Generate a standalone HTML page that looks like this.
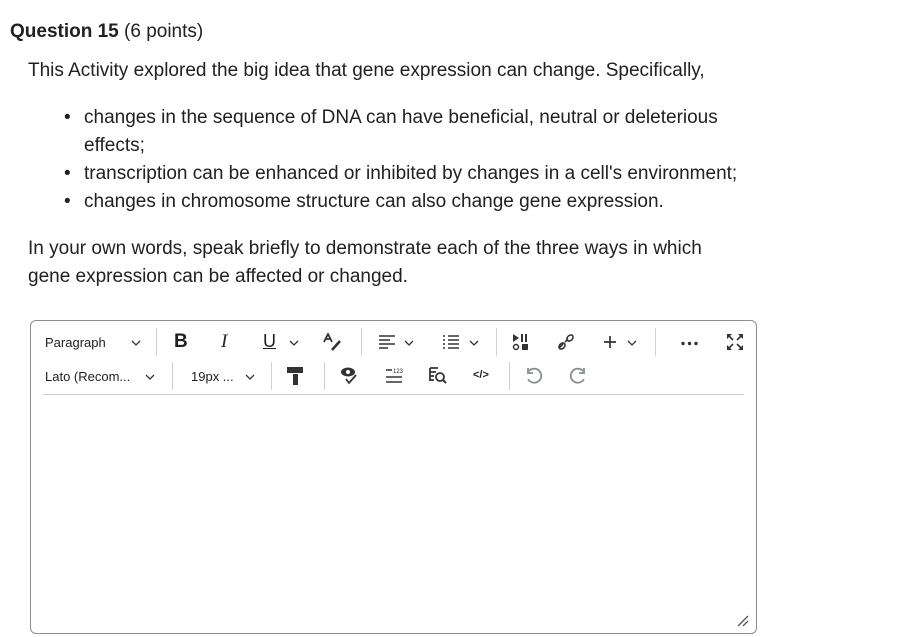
<!DOCTYPE html>
<html><head><style>
body{margin:0;width:899px;height:637px;background:#fff;font-family:"Liberation Sans",sans-serif;color:#202122;position:relative;overflow:hidden}
.a{position:absolute;white-space:nowrap}
.t{font-size:19px}
.ed{position:absolute;left:30px;top:320px;width:725px;height:312px;border:1px solid #8a8d91;border-radius:6px}
.tb{position:absolute;font-size:13px;color:#202122;white-space:nowrap}
.sep{position:absolute;width:1px;background:#cdd0d4}
svg{position:absolute}
.ch{position:absolute;width:10px;height:6px}
</style></head><body>
<div class="a" style="left:10px;top:21px;font-size:19px"><b>Question 15</b> (6 points)</div>
<div class="a t" style="left:28px;top:60px">This Activity explored the big idea that gene expression can change. Specifically,</div>
<div class="a t" style="left:64px;top:107px">•</div>
<div class="a t" style="left:84px;top:107px">changes in the sequence of DNA can have beneficial, neutral or deleterious</div>
<div class="a t" style="left:84px;top:135px">effects;</div>
<div class="a t" style="left:64px;top:163px">•</div>
<div class="a t" style="left:84px;top:163px">transcription can be enhanced or inhibited by changes in a cell's environment;</div>
<div class="a t" style="left:64px;top:191px">•</div>
<div class="a t" style="left:84px;top:191px">changes in chromosome structure can also change gene expression.</div>
<div class="a t" style="left:28px;top:238px">In your own words, speak briefly to demonstrate each of the three ways in which</div>
<div class="a t" style="left:28px;top:266px">gene expression can be affected or changed.</div>
<div class="ed"></div>
<div class="tb" style="left:45px;top:335px">Paragraph</div>
<svg class="ch" style="left:131px;top:340px" viewBox="0 0 10 6"><path d="M1 1l4 4 4-4" stroke="#333" stroke-width="1.3" fill="none"/></svg>
<div class="sep" style="left:156px;top:328px;height:28px"></div>
<div class="tb" style="left:174px;top:331px;font-size:19px;font-weight:bold">B</div>
<div class="tb" style="left:221px;top:331px;font-size:19px;font-family:'Liberation Serif';font-style:italic">I</div>
<div class="tb" style="left:263px;top:331px;font-size:18px;text-decoration:underline">U</div>
<svg class="ch" style="left:289px;top:340px" viewBox="0 0 10 6"><path d="M1 1l4 4 4-4" stroke="#333" stroke-width="1.3" fill="none"/></svg>
<svg style="left:323px;top:333px" width="20" height="18"><path d="M1 9l4-8 4 8M2.5 6h5" stroke="#333" stroke-width="1.8" fill="none"/><path d="M9 17l8-9" stroke="#333" stroke-width="2.5"/></svg>
<div class="sep" style="left:361px;top:328px;height:28px"></div>
<svg style="left:378px;top:334px" width="18" height="16"><path d="M1 2h16M1 6h11M1 10h16M1 14h9" stroke="#333" stroke-width="1.6"/></svg>
<svg class="ch" style="left:404px;top:340px" viewBox="0 0 10 6"><path d="M1 1l4 4 4-4" stroke="#333" stroke-width="1.3" fill="none"/></svg>
<svg style="left:442px;top:334px" width="18" height="16"><path d="M1 2h2M6 2h11M1 6h2M6 6h11M1 10h2M6 10h11M1 14h2M6 14h11" stroke="#333" stroke-width="1.6"/></svg>
<svg class="ch" style="left:469px;top:340px" viewBox="0 0 10 6"><path d="M1 1l4 4 4-4" stroke="#333" stroke-width="1.3" fill="none"/></svg>
<div class="sep" style="left:496px;top:328px;height:28px"></div>
<svg style="left:512px;top:333px" width="18" height="18"><path d="M1 1l6 4-6 4z" fill="#333"/><path d="M10 1v8M14 1v8" stroke="#333" stroke-width="2"/><circle cx="4" cy="14" r="2.5" fill="none" stroke="#333" stroke-width="1.5"/><rect x="10" y="11" width="6" height="6" fill="#333"/></svg>
<svg style="left:556px;top:333px" width="20" height="18"><path d="M3 15l4-4M9 9l3-3" stroke="#333" stroke-width="1.6"/><ellipse cx="6" cy="13" rx="3.5" ry="2.5" transform="rotate(-45 6 13)" fill="none" stroke="#333" stroke-width="1.6"/><ellipse cx="14" cy="5" rx="3.5" ry="2.5" transform="rotate(-45 14 5)" fill="none" stroke="#333" stroke-width="1.6"/></svg>
<svg style="left:603px;top:335px" width="14" height="14"><path d="M7 1v12M1 7h12" stroke="#333" stroke-width="1.7"/></svg>
<svg class="ch" style="left:627px;top:340px" viewBox="0 0 10 6"><path d="M1 1l4 4 4-4" stroke="#333" stroke-width="1.3" fill="none"/></svg>
<div class="sep" style="left:655px;top:328px;height:28px"></div>
<svg style="left:681px;top:341px" width="20" height="5"><circle cx="2" cy="2.5" r="1.7" fill="#333"/><circle cx="8.5" cy="2.5" r="1.7" fill="#333"/><circle cx="15" cy="2.5" r="1.7" fill="#333"/></svg>
<svg style="left:726px;top:333px" width="18" height="18"><path d="M1 1h5l-5 5zM17 1h-5l5 5zM1 17h5l-5-5zM17 17h-5l5-5z" fill="#333"/><path d="M3 3l4 4M15 3l-4 4M3 15l4-4M15 15l-4-4" stroke="#333" stroke-width="1.6"/></svg>

<div class="tb" style="left:45px;top:369px">Lato (Recom...</div>
<svg class="ch" style="left:145px;top:374px" viewBox="0 0 10 6"><path d="M1 1l4 4 4-4" stroke="#333" stroke-width="1.3" fill="none"/></svg>
<div class="sep" style="left:172px;top:362px;height:28px"></div>
<div class="tb" style="left:191px;top:369px">19px ...</div>
<svg class="ch" style="left:245px;top:374px" viewBox="0 0 10 6"><path d="M1 1l4 4 4-4" stroke="#333" stroke-width="1.3" fill="none"/></svg>
<div class="sep" style="left:271px;top:362px;height:28px"></div>
<svg style="left:286px;top:366px" width="20" height="20"><rect x="1" y="1" width="16" height="6" fill="#333"/><rect x="7" y="8" width="5" height="11" fill="#333"/></svg>
<div class="sep" style="left:324px;top:362px;height:28px"></div>
<svg style="left:340px;top:366px" width="20" height="20"><ellipse cx="8" cy="6" rx="7" ry="4.5" fill="#333"/><circle cx="8" cy="6" r="2" fill="#fff"/><path d="M6 13l3 4 7-8" stroke="#333" stroke-width="1.8" fill="none"/></svg>
<svg style="left:385px;top:368px" width="20" height="16"><path d="M1 2h6M1 9h16M1 14h16" stroke="#333" stroke-width="1.6"/><text x="8" y="5" font-size="6" font-family="Liberation Sans" fill="#333">123</text></svg>
<svg style="left:429px;top:367px" width="20" height="18"><path d="M1 1h8M1 5h6M1 9h4M1 13h4M1 1v13" stroke="#333" stroke-width="1.8"/><circle cx="11" cy="10" r="4" fill="none" stroke="#333" stroke-width="1.8"/><path d="M14 13l3 3" stroke="#333" stroke-width="2"/></svg>
<div class="tb" style="left:473px;top:369px;font-size:11px;font-weight:bold">&lt;/&gt;</div>
<div class="sep" style="left:509px;top:362px;height:28px"></div>
<svg style="left:524px;top:367px" width="20" height="18"><path d="M5 4a7 7 0 1 1-1 8" stroke="#8a8d91" stroke-width="1.8" fill="none"/><path d="M4 1v5h5" stroke="#8a8d91" stroke-width="1.8" fill="none"/></svg>
<svg style="left:568px;top:367px" width="20" height="18"><path d="M15 4a7 7 0 1 0 1 8" stroke="#8a8d91" stroke-width="1.8" fill="none"/><path d="M16 1v5h-5" stroke="#8a8d91" stroke-width="1.8" fill="none"/></svg>
<div style="position:absolute;left:43px;top:394px;width:701px;height:1px;background:#cdd0d4"></div>
<svg style="left:737px;top:615px" width="12" height="12"><path d="M1 11L11 1M6 11l5-5" stroke="#555" stroke-width="1.3"/></svg>
</body></html>
